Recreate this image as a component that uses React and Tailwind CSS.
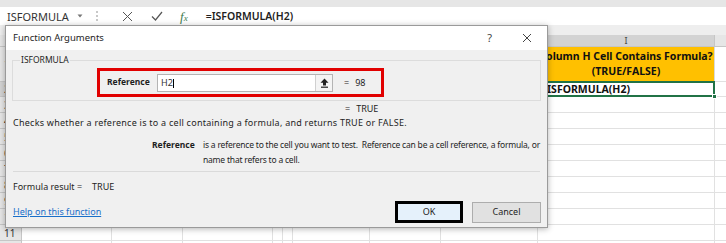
import React from "react";

const COLS = ["A", "B", "C", "D", "E", "F", "G", "H", "I", "J"];
const ROWS = [1, 2, 3, 4, 5, 6, 7, 8, 9, 10, 11, 12];

function Grid() {
  const cells = [];
  cells.push(
    <div key="corner" className="bg-[#e6e6e6] border-r border-b border-[#c6c6c6]" />
  );
  COLS.forEach((c) => {
    cells.push(
      <div
        key={"h" + c}
        className={
          "flex items-center justify-center text-[9px] leading-none text-[#444] border-r border-b border-[#c6c6c6] " +
          (c === "I" ? "bg-[#d3d3d3]" : "bg-[#e6e6e6]")
        }
      >
        {c === "J" ? "" : c}
      </div>
    );
  });
  ROWS.forEach((r) => {
    cells.push(
      <div
        key={"r" + r}
        className={
          "flex items-center justify-start pl-[4px] text-[10px] leading-none text-[#333] border-r border-b border-[#c6c6c6] " +
          (r === 2 ? "bg-[#d3d3d3]" : "bg-[#e6e6e6]")
        }
      >
        {r < 12 ? r : ""}
      </div>
    );
    COLS.forEach((c) => {
      if (c === "I" && r === 1) {
        cells.push(
          <div
            key={c + r}
            className="flex flex-col items-center justify-center bg-[#ffc000] border-r border-b border-[#d9d9d9] font-['Noto_Sans',sans-serif] font-bold text-[10.5px] leading-[15px] text-[#111] whitespace-nowrap"
          >
            <span>Column H Cell Contains Formula?</span>
            <span>(TRUE/FALSE)</span>
          </div>
        );
      } else if (c === "I" && r === 2) {
        cells.push(
          <div
            key={c + r}
            className="relative flex items-center pl-[3px] bg-white border-r border-b border-[#e1e1e1] font-['Noto_Sans',sans-serif] font-bold text-[10.5px] leading-none text-[#111] whitespace-nowrap"
          >
            <span>=ISFORMULA(H2)</span>
            <div className="absolute -left-[1px] -top-[1px] -right-[1px] -bottom-[1px] border-2 border-[#217346]" />
            <div className="absolute -right-[3px] -bottom-[3px] w-[5px] h-[5px] bg-[#217346] border border-white" />
          </div>
        );
      } else {
        cells.push(
          <div
            key={c + r}
            className={"bg-white border-b border-[#e1e1e1] " + (c === "J" ? "" : "border-r")}
          />
        );
      }
    });
  });
  return (
    <div className="grid grid-cols-[22px_90px_71px_90px_10px_10px_77px_71px_97px_177px_40px] grid-rows-[12px_35px_15px_16px_16px_16px_16px_16px_16px_16px_16px_16px_16px]">
      {cells}
    </div>
  );
}

function UploadIcon() {
  return (
    <svg width="9" height="10" viewBox="0 0 9 10">
      <path d="M4.5 0.5 L8.5 4.8 L6 4.8 L6 7.5 L3 7.5 L3 4.8 L0.5 4.8 Z" fill="#222" />
      <rect x="1" y="8.6" width="7" height="1.2" fill="#222" />
    </svg>
  );
}

function Dialog() {
  return (
    <div className="absolute left-[5px] top-[25px] w-[543px] h-[203px] border border-[#9a9a9a] bg-[#f0f0f0] shadow-[0_1px_6px_rgba(0,0,0,0.3)] flex flex-col font-['Noto_Sans',sans-serif] text-[#1e1e1e]">
      <div className="h-[24px] bg-white flex items-center pl-[7px] pr-[15px] text-[9.5px]">
        <span>Function Arguments</span>
        <span className="ml-auto mr-[30px] text-[11px] text-[#444]">?</span>
        <svg width="10" height="10" viewBox="0 0 10 10">
          <path d="M1 1 L9 9 M9 1 L1 9" stroke="#444" strokeWidth="1" />
        </svg>
      </div>
      <div className="flex-1 flex flex-col px-[6px] text-[9px] whitespace-nowrap">
        <div className="relative mt-[10px] h-[41px] border border-[#dcdcdc]">
          <span className="absolute -top-[7px] left-[7px] bg-[#f0f0f0] px-[1px] leading-[12px] text-[8.5px]">
            ISFORMULA
          </span>
          <div className="ml-[84px] mt-[7px] w-[287px] h-[29px] border-[3px] border-[#e10000] flex items-center">
            <span className="ml-[7px] w-[50px] shrink-0 font-bold text-[8.5px]">Reference</span>
            <div className="w-[176px] shrink-0 h-[18px] flex items-center border border-[#b4b4b4] bg-white">
              <span className="pl-[3px] flex-1 text-[#333]">
                H2<span className="inline-block w-px h-[9px] bg-[#000] align-middle" />
              </span>
              <div className="w-[17px] h-full flex items-center justify-center bg-[#f4f4f4] border-l border-[#d0d0d0]">
                <UploadIcon />
              </div>
            </div>
            <span className="ml-[11px]">=</span>
            <span className="ml-[6px]">98</span>
          </div>
        </div>
        <div className="mt-[1px] h-[14px] flex items-center pl-[333px]">
          <span>=</span>
          <span className="ml-[6px]">TRUE</span>
        </div>
        <div className="h-[14px] flex items-center pl-[1px] tracking-[0.25px]">
          Checks whether a reference is to a cell containing a formula, and returns TRUE or FALSE.
        </div>
        <div className="mt-[7px] flex leading-[15px]">
          <span className="ml-[140px] w-[51px] shrink-0 font-bold text-[8.5px]">Reference</span>
          <div className="flex flex-col text-[8.5px] tracking-[-0.2px]">
            <span>is a reference to the cell you want to test.&nbsp; Reference can be a cell reference, a formula, or</span>
            <span>name that refers to a cell.</span>
          </div>
        </div>
        <div className="mt-[4px] h-px bg-[#dadada] mx-[1px]" />
        <div className="mt-[9px] h-[12px] flex items-center pl-[1px]">
          <span>Formula result =</span>
          <span className="ml-[10px]">TRUE</span>
        </div>
        <div className="mt-[8px] flex items-center">
          <span className="pl-[1px] text-[#1a6fc9] underline">Help on this function</span>
          <div className="ml-auto flex items-center gap-[9px]">
            <div className="w-[68px] h-[22px] border-[3px] border-black bg-[#e5f1fb] flex items-center justify-center">
              OK
            </div>
            <div className="w-[69px] h-[21px] border border-[#adadad] bg-[#e1e1e1] flex items-center justify-center">
              Cancel
            </div>
          </div>
        </div>
      </div>
    </div>
  );
}

function FormulaBar() {
  return (
    <div className="h-[18px] bg-white flex items-center font-['Noto_Sans',sans-serif]">
      <span className="ml-[7px] w-[66px] text-[11px] text-[#333] leading-none">ISFORMULA</span>
      <svg width="6" height="4" viewBox="0 0 6 4" className="ml-[4px]">
        <path d="M0.5 0.5 L3 3.5 L5.5 0.5 Z" fill="#777" />
      </svg>
      <div className="ml-[13px] flex flex-col gap-[2px]">
        <div className="w-[2px] h-[2px] bg-[#c8c8c8]" />
        <div className="w-[2px] h-[2px] bg-[#c8c8c8]" />
        <div className="w-[2px] h-[2px] bg-[#c8c8c8]" />
      </div>
      <svg width="11" height="11" viewBox="0 0 11 11" className="ml-[24px]">
        <path d="M1 1 L10 10 M10 1 L1 10" stroke="#555" strokeWidth="1" />
      </svg>
      <svg width="12" height="10" viewBox="0 0 12 10" className="ml-[18px]">
        <path d="M1 5.5 L4.5 9 L11 1" stroke="#555" strokeWidth="1.2" fill="none" />
      </svg>
      <span className="ml-[17px] font-['Liberation_Serif',serif] italic text-[13px] text-[#3d7a4e] leading-none">
        f<span className="text-[9px]">x</span>
      </span>
      <span className="ml-[18px] text-[10.5px] font-semibold text-[#222] leading-none">=ISFORMULA(H2)</span>
    </div>
  );
}

export default function App() {
  return (
    <div className="relative w-[726px] h-[243px] overflow-hidden bg-white font-['Noto_Sans',sans-serif]">
      <div className="h-[7px] bg-[#e6e6e6]" />
      <FormulaBar />
      <div className="h-[10px] bg-[#eeeeee]" />
      <Grid />
      <Dialog />
    </div>
  );
}
